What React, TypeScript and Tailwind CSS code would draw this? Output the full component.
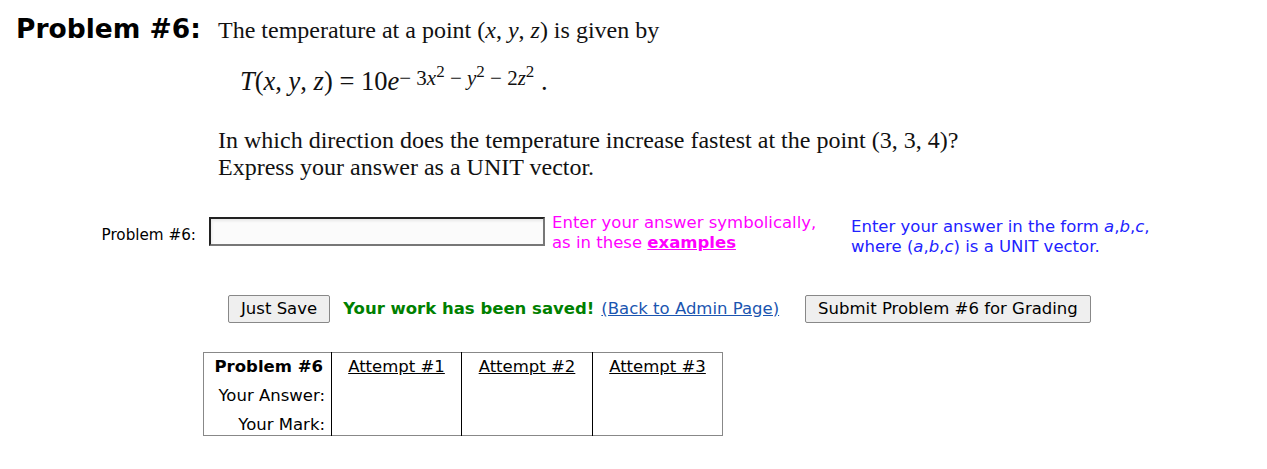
const sans = "font-['Verdana','DejaVu_Sans',sans-serif]";
const serif = "font-['Liberation_Serif','Times_New_Roman',serif]";

export default function App() {
  return (
    <div className={`min-h-[469px] w-[1267px] bg-white text-black ${sans}`}>
      <div className="flex items-start pl-[16px] pt-[14px]">
        <div className="w-[202px] shrink-0 text-[26.5px] font-bold leading-[30px]">Problem #6:</div>
        <div className={`${serif} pt-[3px] text-[24px] leading-[27px] text-[#111]`}>
          <div>
            The temperature at a point (<i>x</i>, <i>y</i>, <i>z</i>) is given by
          </div>
          <div className="mt-[22px] pl-[22px] text-[26.5px] leading-[30px]">
            <i>T</i>(<i>x</i>, <i>y</i>, <i>z</i>) = 10<i>e</i>
            <sup className="relative top-[-5px] text-[21px]">
              − 3<i>x</i>
              <sup className="text-[17px]">2</sup>&nbsp;− <i>y</i>
              <sup className="text-[17px]">2</sup>&nbsp;− 2<i>z</i>
              <sup className="text-[17px]">2</sup>
            </sup>
            &nbsp;.
          </div>
          <div className="mt-[31px]">In which direction does the temperature increase fastest at the point (3, 3, 4)?</div>
          <div>Express your answer as a UNIT vector.</div>
        </div>
      </div>

      <div className="mt-[36px] flex items-start">
        <div className="w-[209px] shrink-0 pt-[7px] pr-[13px] text-right text-[15.2px]">Problem #6:</div>
        <div className="h-[29px] w-[336px] shrink-0 border-2 border-t-[#222] border-l-[#222] border-r-[#777] border-b-[#777] bg-[#fbfbfb] shadow-[inset_1px_2px_3px_rgba(0,0,0,0.08)]" />
        <div className="ml-[7px] mt-[-4px] w-[299px] text-[16.5px] leading-[20px] text-[#ff00ff]">
          Enter your answer symbolically,
          <br />
          as in these <span className="font-bold underline">examples</span>
        </div>
        <div className="text-[16.5px] leading-[20px] text-[#2222ff]">
          Enter your answer in the form <i>a</i>,<i>b</i>,<i>c</i>,
          <br />
          where (<i>a</i>,<i>b</i>,<i>c</i>) is a UNIT vector.
        </div>
      </div>

      <div className="mt-[38px] flex items-center pl-[228px] text-[16.5px]">
        <button className="h-[28px] rounded-[2px] border border-[#888] bg-[#efefef] px-[12px]">Just Save</button>
        <span className="ml-[13px] font-bold text-[#008000]">Your work has been saved!</span>
        <span className="ml-[7px] text-[#1a55b0] underline">(Back to Admin Page)</span>
        <button className="ml-[26px] h-[28px] rounded-[2px] border border-[#888] bg-[#efefef] px-[12px]">
          Submit Problem #6 for Grading
        </button>
      </div>

      <div className="mt-[29px] pl-[203px]">
        <table className="border-collapse border border-[#888] text-[16.5px]">
          <tbody>
            <tr>
              <td className="h-[29px] w-[128px] border-r border-black pr-[8px] text-right font-bold">Problem #6</td>
              <td className="w-[130px] border-r border-black text-center underline">Attempt #1</td>
              <td className="w-[131px] border-r border-black text-center underline">Attempt #2</td>
              <td className="w-[130px] text-center underline">Attempt #3</td>
            </tr>
            <tr>
              <td className="h-[29px] border-r border-black pr-[6px] text-right">Your Answer:</td>
              <td className="border-r border-black" />
              <td className="border-r border-black" />
              <td />
            </tr>
            <tr>
              <td className="h-[24px] border-r border-black pr-[6px] pt-[4px] text-right leading-[20px]">Your Mark:</td>
              <td className="border-r border-black" />
              <td className="border-r border-black" />
              <td />
            </tr>
          </tbody>
        </table>
      </div>
    </div>
  );
}
